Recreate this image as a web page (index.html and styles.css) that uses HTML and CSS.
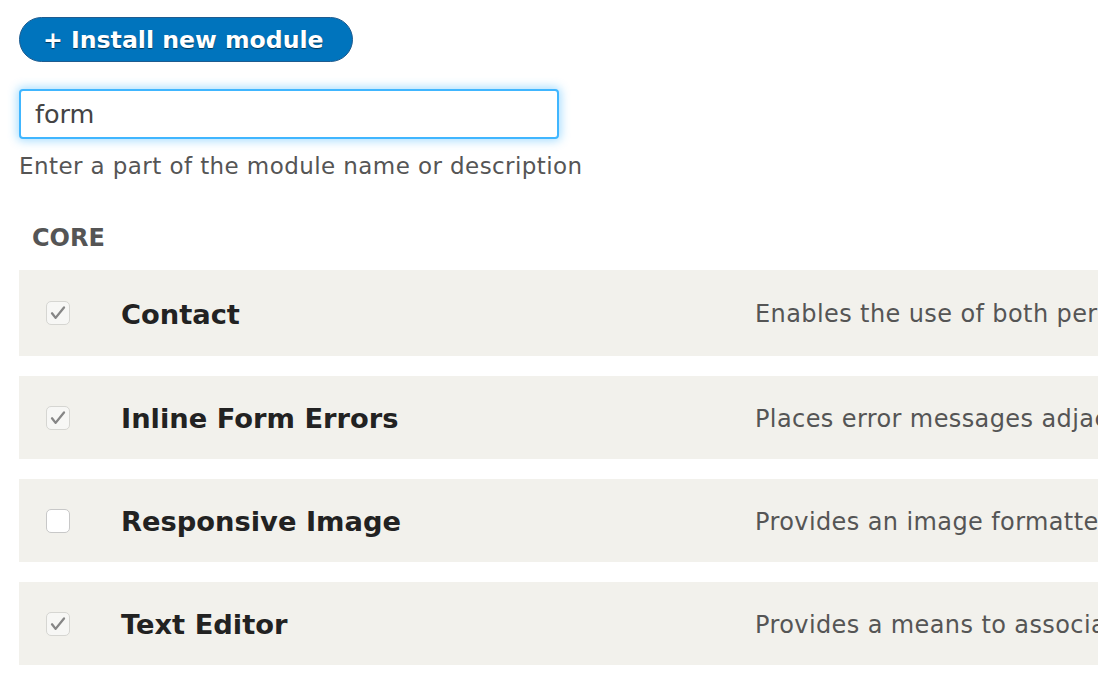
FILE: index.html
```html
<!DOCTYPE html>
<html>
<head>
<meta charset="utf-8">
<link rel="stylesheet" href="styles.css">
</head>
<body>
<div class="page">
  <div class="actions">
    <a class="btn-primary" href="#">+ Install new module</a>
  </div>
  <div class="filter">
    <input class="filter-input" type="text" value="form">
    <div class="filter-help">Enter a part of the module name or description</div>
  </div>
  <div class="package">
    <h2 class="package-title">CORE</h2>
    <div class="module-list">
      <div class="module first">
        <span class="cb checked"><svg viewBox="0 0 24 24" width="24" height="24"><path d="M6 12.3l3.6 4.6L18 6.5" fill="none" stroke="#868686" stroke-width="2.3" stroke-linecap="round" stroke-linejoin="round"/></svg></span>
        <span class="name">Contact</span>
        <span class="desc">Enables the use of both personal and site-wide contact forms.</span>
      </div>
      <div class="module">
        <span class="cb checked"><svg viewBox="0 0 24 24" width="24" height="24"><path d="M6 12.3l3.6 4.6L18 6.5" fill="none" stroke="#868686" stroke-width="2.3" stroke-linecap="round" stroke-linejoin="round"/></svg></span>
        <span class="name">Inline Form Errors</span>
        <span class="desc">Places error messages adjacent to form inputs.</span>
      </div>
      <div class="module">
        <span class="cb"></span>
        <span class="name">Responsive Image</span>
        <span class="desc">Provides an image formatter and breakpoint mappings.</span>
      </div>
      <div class="module">
        <span class="cb checked"><svg viewBox="0 0 24 24" width="24" height="24"><path d="M6 12.3l3.6 4.6L18 6.5" fill="none" stroke="#868686" stroke-width="2.3" stroke-linecap="round" stroke-linejoin="round"/></svg></span>
        <span class="name">Text Editor</span>
        <span class="desc">Provides a means to associate text formats with text editor libraries.</span>
      </div>
    </div>
  </div>
</div>
</body>
</html>
```

FILE: styles.css
```css
html, body {
  margin: 0;
  padding: 0;
  background: #ffffff;
  overflow: hidden;
}
body {
  font-family: "DejaVu Sans", "Liberation Sans", sans-serif;
  color: #555555;
}
.page {
  padding: 17px 0 0 19px;
}
.actions {
  display: flex;
}
.btn-primary {
  display: inline-flex;
  align-items: center;
  box-sizing: border-box;
  height: 45px;
  width: 334px;
  padding: 0 0 0 23px;
  border: 1px solid #1e5c90;
  border-radius: 24px;
  background: #0074bd;
  color: #ffffff;
  font-weight: bold;
  font-size: 23.6px;
  text-decoration: none;
  text-shadow: 0 1px 1px rgba(0, 0, 0, 0.55);
  white-space: nowrap;
}
.filter {
  margin-top: 27px;
}
.filter-input {
  display: block;
  box-sizing: border-box;
  width: 540px;
  height: 50px;
  margin: 0;
  padding: 0 0 0 14px;
  border: 2px solid #40b6ff;
  border-radius: 4px;
  box-shadow: 0 0 10px 2px rgba(64, 182, 255, 0.45);
  font-family: "DejaVu Sans", "Liberation Sans", sans-serif;
  font-size: 25.5px;
  color: #444444;
  outline: none;
}
.filter-help {
  margin-top: 12px;
  font-size: 23px;
  letter-spacing: 0.42px;
  line-height: 30px;
  color: #555555;
  white-space: nowrap;
}
.package-title {
  margin: 42px 0 0 13px;
  font-size: 24px;
  line-height: 30px;
  font-weight: bold;
  color: #555555;
}
.module-list {
  margin-top: 17px;
  display: flex;
  flex-direction: column;
  gap: 20px;
  overflow: hidden;
}
.module {
  display: flex;
  align-items: center;
  height: 83px;
  background: #f2f1ec;
  white-space: nowrap;
  overflow: hidden;
}
.module.first {
  height: 86px;
}
.cb {
  box-sizing: border-box;
  flex: none;
  width: 24px;
  height: 24px;
  margin-left: 27px;
  border: 1px solid #c8c8c8;
  border-radius: 5px;
  background: #ffffff;
  display: flex;
  align-items: center;
  justify-content: center;
}
.cb.checked {
  background: #f7f7f5;
  border-color: #d6d6d2;
}
.cb svg {
  display: block;
  flex: none;
}
.name {
  flex: none;
  width: 634px;
  margin-left: 51px;
  padding-top: 2px;
  font-size: 27.3px;
  font-weight: bold;
  color: #222222;
}
.desc {
  flex: none;
  padding-top: 2px;
  font-size: 24px;
  letter-spacing: 0.4px;
  color: #555555;
}
```
